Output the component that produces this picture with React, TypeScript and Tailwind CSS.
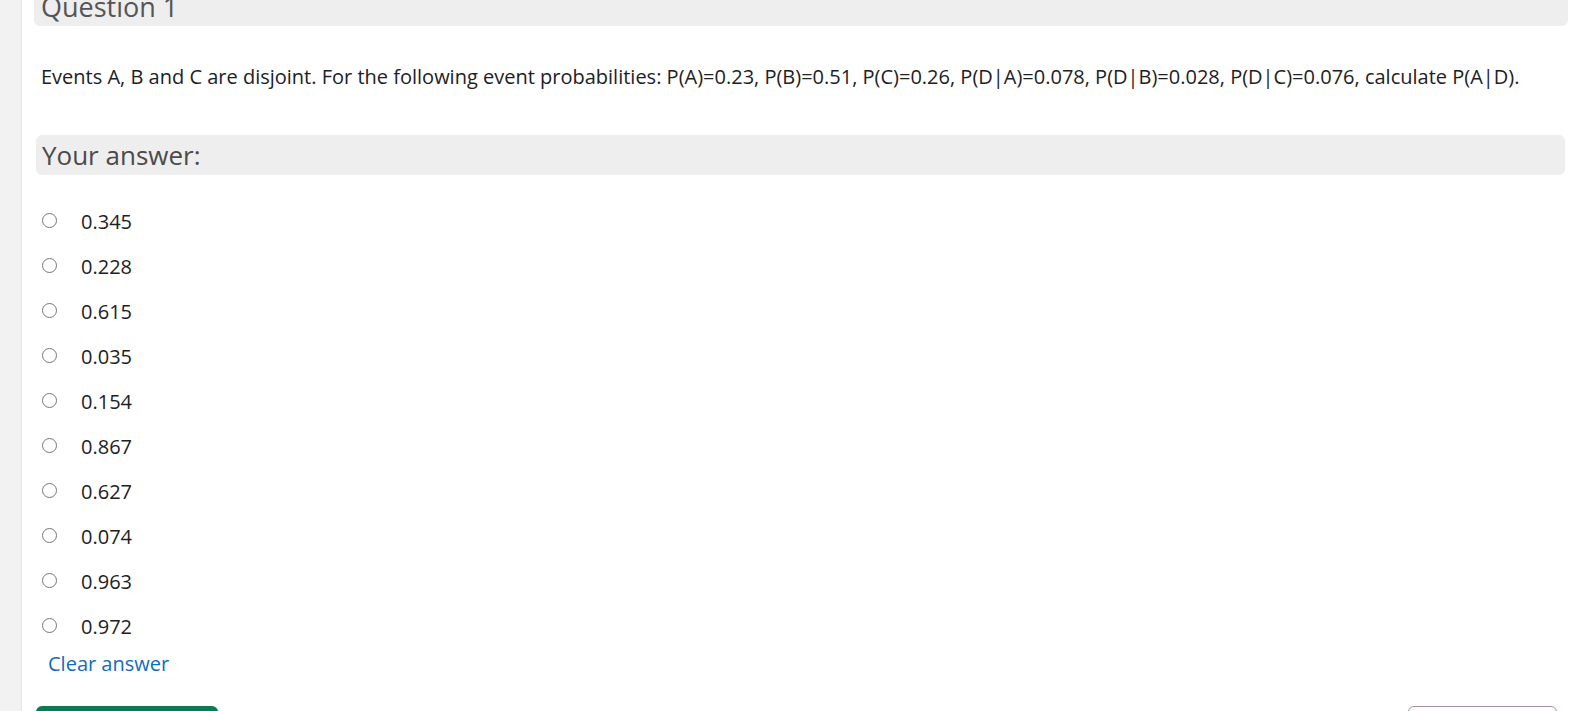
const options = [
  "0.345",
  "0.228",
  "0.615",
  "0.035",
  "0.154",
  "0.867",
  "0.627",
  "0.074",
  "0.963",
  "0.972",
];

export default function App() {
  return (
    <div
      className="flex h-[711px] w-full overflow-hidden bg-white text-[#1d2125]"
      style={{ fontFamily: '"Open Sans", "Liberation Sans", sans-serif' }}
    >
      <div className="w-[22px] shrink-0 border-r border-[#e6e6e6] bg-[#f2f2f2]" />
      <div className="flex min-w-0 flex-1 flex-col pl-[12px] pr-[2px]">
        <div className="-mt-[16px] flex h-[42px] shrink-0 items-end rounded-b-[6px] bg-[#eeeeee] px-[7px] pb-[6px]">
          <span className="text-[27px] leading-none text-[#555555]">Question 1</span>
        </div>

        <p className="mt-[37px] shrink-0 px-[7px] text-[20px] leading-[28px]">
          Events A, B and C are disjoint. For the following event probabilities: P(A)=0.23, P(B)=0.51,
          P(C)=0.26, P(D|A)=0.078, P(D|B)=0.028, P(D|C)=0.076, calculate P(A|D).
        </p>

        <div className="ml-[2px] mr-[3px] mt-[44px] flex h-[40px] shrink-0 items-center rounded-[6px] bg-[#eeeeee] px-[6px]">
          <span className="text-[26px] text-[#4a4a4a]">Your answer:</span>
        </div>

        <div className="mt-[24px] flex shrink-0 flex-col">
          {options.map((opt) => (
            <label key={opt} className="flex h-[45px] items-center">
              <span className="ml-[8px] mt-[-3px] h-[15px] w-[15px] rounded-full border border-[#767676] bg-white" />
              <span className="ml-[24px] text-[20px]">{opt}</span>
            </label>
          ))}
        </div>

        <a className="ml-[14px] mt-[1px] shrink-0 text-[20px] leading-[28px] text-[#0f6cbf]">Clear answer</a>

        <div className="mt-[28px] flex shrink-0 items-start justify-between pl-[2px] pr-[11px]">
          <button className="h-[40px] w-[182px] rounded-[6px] bg-[#0b7a50]" />
          <button className="h-[40px] w-[149px] rounded-[6px] border border-[#a38fa0] bg-white" />
        </div>
      </div>
    </div>
  );
}
